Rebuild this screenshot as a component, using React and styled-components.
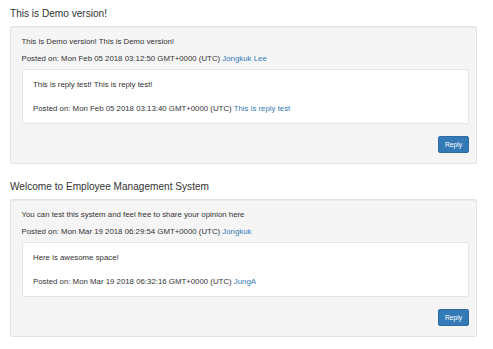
import React from "react";
import styled, { createGlobalStyle } from "styled-components";

const GlobalStyle = createGlobalStyle`
  html, body {
    margin: 0;
    padding: 0;
    background: #ffffff;
  }
  body {
    font-family: "Liberation Sans", Arial, Helvetica, sans-serif;
    color: #333333;
    font-size: 7.84px;
    line-height: 11.2px;
  }
`;

const Page = styled.div`
  padding: 8px 16px 0 10px;
`;

const Title = styled.h4`
  margin: 0 0 6.5px;
  font-size: 10.1px;
  line-height: 11.1px;
  font-weight: 400;
  color: #333333;
`;

const Well = styled.div`
  background: #f5f5f5;
  border: 1px solid #e3e3e3;
  border-radius: 2px;
  box-shadow: inset 0 1px 1px rgba(0, 0, 0, 0.05);
  padding: 9.2px 7px 10px 10.5px;
  margin-bottom: 17.5px;
  display: flex;
  flex-direction: column;
`;

const Text = styled.p`
  margin: 0 0 ${(p) => p.$gap}px;
  font-size: 7.84px;
  line-height: 11.2px;
  white-space: nowrap;
`;

const Link = styled.a`
  color: #337ab7;
  text-decoration: none;
`;

const ReplyBox = styled.div`
  background: #ffffff;
  border: 1px solid #e6e6e6;
  border-radius: 2px;
  padding: 9px 10px 9px 10px;
  margin: 5px 0 0 0.5px;
`;

const Actions = styled.div`
  display: flex;
  justify-content: flex-end;
  margin-top: 11.8px;
`;

const Button = styled.button`
  font-family: "Liberation Sans", Arial, Helvetica, sans-serif;
  font-size: 6.72px;
  line-height: 15px;
  padding: 0 5.9px;
  color: #ffffff;
  background: #337ab7;
  border: 1px solid #2e6da4;
  border-radius: 2px;
  cursor: pointer;
`;

const posts = [
  {
    title: "This is Demo version!",
    body: "This is Demo version! This is Demo version!",
    date: "Mon Feb 05 2018 03:12:50 GMT+0000 (UTC)",
    author: "Jongkuk Lee",
    replies: [
      {
        body: "This is reply test! This is reply test!",
        date: "Mon Feb 05 2018 03:13:40 GMT+0000 (UTC)",
        author: "This is reply test",
      },
    ],
  },
  {
    title: "Welcome to Employee Management System",
    body: "You can test this system and feel free to share your opinion here",
    date: "Mon Mar 19 2018 06:29:54 GMT+0000 (UTC)",
    author: "Jongkuk",
    replies: [
      {
        body: "Here is awesome space!",
        date: "Mon Mar 19 2018 06:32:16 GMT+0000 (UTC)",
        author: "JungA",
      },
    ],
  },
];

function Post({ post }) {
  return (
    <section>
      <Title>{post.title}</Title>
      <Well>
        <Text $gap={5.6}>{post.body}</Text>
        <Text $gap={0}>
          Posted on: {post.date} <Link href="#">{post.author}</Link>
        </Text>
        {post.replies.map((r, i) => (
          <ReplyBox key={i}>
            <Text $gap={12.9}>{r.body}</Text>
            <Text $gap={0}>
              Posted on: {r.date} <Link href="#">{r.author}</Link>
            </Text>
          </ReplyBox>
        ))}
        <Actions>
          <Button type="button">Reply</Button>
        </Actions>
      </Well>
    </section>
  );
}

export default function App() {
  return (
    <>
      <GlobalStyle />
      <Page>
        {posts.map((p, i) => (
          <Post key={i} post={p} />
        ))}
      </Page>
    </>
  );
}
